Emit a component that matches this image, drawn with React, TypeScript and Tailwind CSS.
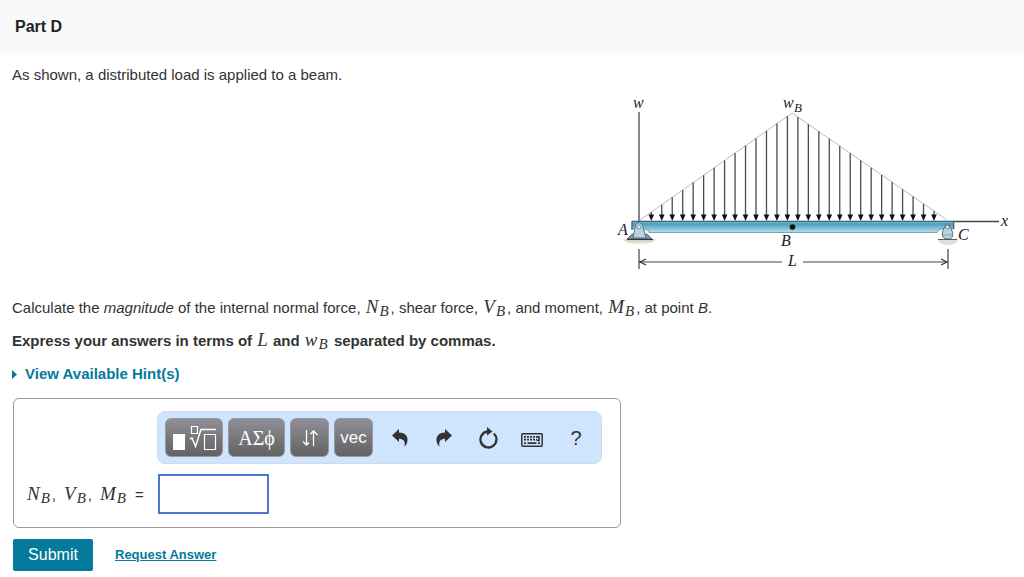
import type { ReactNode } from "react";

const arrows = Array.from({ length: 28 }, (_, i) => {
  const x = 39.3 + i * 10.47;
  const top = x < 180 ? 125 - ((x - 28) * 107) / 152 : 18 + ((x - 180) * 107) / 155;
  return { x, top };
});

function MathVar({ name, sub }: { name: string; sub?: string }) {
  return (
    <span className="mx-px font-['Liberation_Serif',serif] text-[19px] leading-none font-normal italic">
      {name}
      {sub && <sub className="bottom-[-3px] mx-px text-[15px]">{sub}</sub>}
    </span>
  );
}

function BeamFigure() {
  return (
    <svg
      viewBox="0 0 400 180"
      className="mt-[10px] ml-auto block w-[400px] font-['Liberation_Serif',serif] text-base italic"
      role="img"
      aria-label="Beam with a triangular distributed load"
    >
      <defs>
        <linearGradient id="beam" x1="0" y1="0" x2="0" y2="1">
          <stop offset="0" stopColor="#8fc3d8" />
          <stop offset="0.25" stopColor="#4a9fc0" />
          <stop offset="1" stopColor="#b9e0ec" />
        </linearGradient>
        <linearGradient id="ground" x1="0" y1="0" x2="0" y2="1">
          <stop offset="0" stopColor="#cfc9b8" />
          <stop offset="1" stopColor="#f6f4ee" />
        </linearGradient>
      </defs>

      {/* axes */}
      <path d="M27 17V126M342 126.5H387" stroke="#444" strokeWidth="1.3" fill="none" />

      {/* load */}
      <path d="M28 125L180 18L335 125" stroke="#aaa" strokeWidth="0.8" fill="none" />
      {arrows.map(({ x, top }) => (
        <g key={x}>
          <path d={`M${x} ${top}V121`} stroke="#4a4a4a" strokeWidth="1.3" />
          <path d={`M${x - 2.8} 119.5H${x + 2.8}L${x} 126Z`} fill="#111" />
        </g>
      ))}

      {/* beam */}
      <path
        d="M20 126H342V134H330Q326 134 325 137.5H37Q36 134 32 134H20Z"
        fill="url(#beam)"
        stroke="#55809a"
        strokeWidth="0.7"
      />
      <path d="M20 126.5H342M20 126V135M341.5 126V134" stroke="#456779" strokeWidth="1.2" />
      <circle cx="180.5" cy="132" r="2.8" fill="#111" />

      {/* pin support at A */}
      <path d="M11 144.5H44Q40 149 28 149.5Q15 149 11 144.5Z" fill="url(#ground)" />
      <path d="M15 144L18 141Q20 138 23 139L31 139Q35 138 37 141L40 144Z" fill="#7d98a7" stroke="#354c58" strokeWidth="0.7" />
      <path d="M21 143L23.5 130Q27 125 30.5 130L34 143Z" fill="#b7d2e2" stroke="#4b6677" strokeWidth="0.9" />
      <circle cx="27" cy="132" r="2" fill="#dce8ee" stroke="#667e8b" strokeWidth="0.8" />
      <path d="M15 144.5H41" stroke="#333" strokeWidth="1" />

      {/* roller support at C */}
      <path d="M326 144.5H346Q344 150 336 150Q328 150 326 144.5Z" fill="#dedede" />
      <path d="M326 144.5H345" stroke="#555" strokeWidth="1" />
      <path d="M333 131Q335.5 127 338 131L340.5 137Q342 144 336 144Q329 144 330.5 137Z" fill="#b7d2e2" stroke="#4b6677" strokeWidth="0.9" />
      <circle cx="335.5" cy="132" r="1.8" fill="#fff" stroke="#445d6b" strokeWidth="0.8" />
      <path d="M331 140H341" stroke="#7394a5" strokeWidth="0.8" />

      {/* span */}
      <path d="M27 154V174M336 154V174M27 167H170M191 167H335" stroke="#444" strokeWidth="1.2" fill="none" />
      <path d="M34 164L28 167L34 170M329 164L335 167L329 170" stroke="#333" strokeWidth="1.2" fill="none" />

      <g fill="#222">
        <text x="21" y="13">w</text>
        <text x="171" y="13">w</text>
        <text x="182" y="17" fontSize="13">B</text>
        <text x="6" y="140">A</text>
        <text x="169" y="151">B</text>
        <text x="346" y="145">C</text>
        <text x="176" y="171">L</text>
        <text x="389" y="131">x</text>
      </g>
    </svg>
  );
}

function ToolButton({ label, className, children }: { label: string; className: string; children: ReactNode }) {
  return (
    <button
      type="button"
      aria-label={label}
      className={`flex h-[39px] items-center justify-center rounded-md border border-[#999] bg-linear-to-b from-[#908f98] to-[#626262] text-white ${className}`}
    >
      {children}
    </button>
  );
}

function IconButton({ label, children }: { label: string; children: ReactNode }) {
  return (
    <button type="button" aria-label={label} className="flex h-10 w-11 items-center justify-center text-[#333]">
      {children}
    </button>
  );
}

function Toolbar() {
  return (
    <div className="flex h-[53px] w-[445px] items-center rounded-lg border border-[#d5dbe3] bg-[#cfe5ff] pl-[7px]">
      <div className="flex gap-[5px]">
        <ToolButton label="Templates" className="w-[58px]">
          <svg width="46" height="26" viewBox="0 0 46 26" fill="none" stroke="#fff">
            <path d="M2 9H14V25H2Z" fill="#fff" stroke="none" />
            <path d="M20.5 1.5H26.5V8.5H20.5Z" strokeWidth="1.2" />
            <path d="M19 14L21 13L24.5 21.5L30 4.5H45" strokeWidth="1.4" />
            <path d="M33.5 9.5H44.5V24.5H33.5Z" strokeWidth="1.2" />
          </svg>
        </ToolButton>
        <ToolButton label="Symbols" className="w-[57px] font-['Liberation_Serif',serif] text-xl">
          ΑΣϕ
        </ToolButton>
        <ToolButton label="Arrows" className="w-[39px]">
          <svg width="18" height="18" viewBox="0 0 18 18" fill="none" stroke="#fff" strokeWidth="1.3">
            <path d="M5.5 1V16M2 12.5L5.5 16L8 13.5M12.5 17V2M9.5 5L12.5 2L16.5 6" />
          </svg>
        </ToolButton>
        <ToolButton label="Vectors" className="w-[39px] text-[17px]">
          vec
        </ToolButton>
      </div>
      <div className="ml-[5px] flex">
        <IconButton label="Undo">
          <svg width="16" height="18" viewBox="0 0 16 18" fill="currentColor">
            <path d="M0 6.5L7 0V3.5C12.5 3.5 16 7 15.5 11.5C15.2 14.5 14 16.5 12.5 17.5C13.5 13 12 10 7 9.8V13Z" />
          </svg>
        </IconButton>
        <IconButton label="Redo">
          <svg width="16" height="18" viewBox="0 0 16 18" fill="currentColor">
            <path d="M16 6.5L9 0V3.5C3.5 3.5 0 7 0.5 11.5C0.8 14.5 2 16.5 3.5 17.5C2.5 13 4 10 9 9.8V13Z" />
          </svg>
        </IconButton>
        <IconButton label="Reset">
          <svg width="20" height="22" viewBox="0 0 20 22">
            <path d="M15.8 6.5A8 8 0 1 1 9.5 4.5" fill="none" stroke="currentColor" strokeWidth="2.3" />
            <path d="M9 0L14.5 4.5L9 8.5Z" fill="currentColor" />
          </svg>
        </IconButton>
        <IconButton label="Keyboard shortcuts">
          <svg width="22" height="14" viewBox="0 0 22 14" className="mt-1">
            <rect x="0.8" y="0.8" width="20.4" height="12.4" rx="1" fill="none" stroke="currentColor" strokeWidth="1.5" />
            <path d="M3 3.8H17M3 6.7H16" stroke="currentColor" strokeWidth="1.8" strokeDasharray="2 1" />
            <path d="M18 3V7.5H16M3 10.2H5M6.5 10.2H15.5M17 10.2H19" stroke="currentColor" strokeWidth="1.7" fill="none" />
          </svg>
        </IconButton>
        <IconButton label="Help">
          <span className="text-xl">?</span>
        </IconButton>
      </div>
    </div>
  );
}

export default function App() {
  return (
    <main className="min-h-screen bg-white font-['Liberation_Sans',Arial,sans-serif] text-[15px] leading-5 text-[#333]">
      <header className="bg-[#f9f9f9] px-[15px] py-4">
        <h1 className="text-base leading-[21px] font-bold text-[#222]">Part D</h1>
      </header>

      <div className="px-3 pt-3">
        <p>As shown, a distributed load is applied to a beam.</p>
        <BeamFigure />

        <p className="mt-[22px]">
          Calculate the <em>magnitude</em> of the internal normal force, <MathVar name="N" sub="B" />, shear force,{" "}
          <MathVar name="V" sub="B" />, and moment, <MathVar name="M" sub="B" />, at point <em>B</em>.
        </p>
        <p className="mt-3 font-bold">
          Express your answers in terms of <MathVar name="L" /> and <MathVar name="w" sub="B" /> separated by commas.
        </p>
        <button type="button" className="mt-[13px] flex items-center font-bold text-[#047a9c]">
          <svg width="5" height="9" viewBox="0 0 5 9" className="mr-2" fill="currentColor">
            <path d="M0 0L5 4.5L0 9Z" />
          </svg>
          View Available Hint(s)
        </button>

        <form className="pl-px">
          <div className="mt-[14px] w-full max-w-[608px] rounded-md border border-[#999] pt-3 pb-[13px]">
            <div className="pl-[143px]">
              <Toolbar />
            </div>
            <div className="mt-[10px] flex items-center pl-3">
              <label htmlFor="answer" className="flex w-[132px] items-baseline gap-[7px] whitespace-nowrap">
                <span>
                  <MathVar name="N" sub="B" />,
                </span>
                <span>
                  <MathVar name="V" sub="B" />,
                </span>
                <MathVar name="M" sub="B" />
                <span>=</span>
              </label>
              <input id="answer" type="text" className="h-10 w-[111px] border-2 border-[#4a76d4] bg-white px-2 outline-none" />
            </div>
          </div>

          <div className="mt-[11px] flex items-center pb-1">
            <button type="button" className="h-8 w-20 rounded-xs bg-[#047a9c] text-base text-white">
              Submit
            </button>
            <a href="#request-answer" className="ml-[22px] text-[13px] font-bold text-[#047a9c] underline">
              Request Answer
            </a>
          </div>
        </form>
      </div>
    </main>
  );
}
